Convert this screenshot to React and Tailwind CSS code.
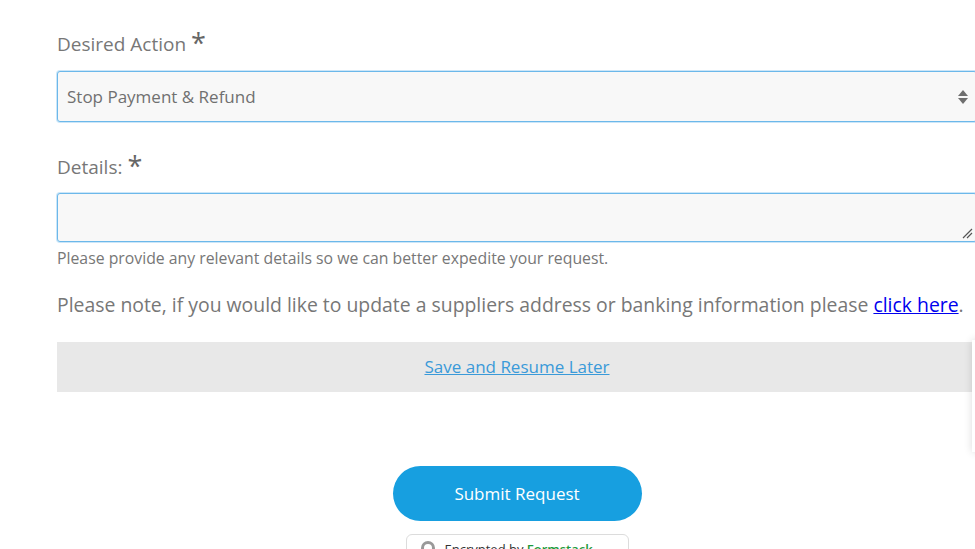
import React from "react";

export default function App() {
  return (
    <div
      className="relative h-[549px] w-[975px] overflow-hidden bg-white text-[#777]"
      style={{ fontFamily: '"Open Sans", "Noto Sans", sans-serif' }}
    >
      <div className="ml-[57px] w-[920px] pt-[28px]">
        <label className="flex items-start text-[19px] leading-[32px]">
          Desired Action
          <span className="ml-[5px] text-[27px] leading-[30px] text-[#666]">*</span>
        </label>
        <div className="relative mt-[11px] flex h-[51px] items-center rounded-[3px] border border-[#6cb8ea] bg-[#f8f8f8] pl-[9px] text-[17px] text-[#707070] shadow-[0_0_0_1px_rgba(108,184,234,0.35)]">
          Stop Payment &amp; Refund
          <svg className="absolute left-[899px] top-[17px]" width="12" height="16" viewBox="0 0 12 16">
            <path d="M6 1 L11 7 L1 7 Z" fill="#6f6f6f" />
            <path d="M1 9 L11 9 L6 15 Z" fill="#6f6f6f" />
          </svg>
        </div>

        <label className="mt-[29px] flex items-start text-[19px] leading-[32px]">
          Details:
          <span className="ml-[5px] text-[27px] leading-[30px] text-[#666]">*</span>
        </label>
        <div className="relative mt-[10px] h-[49px] rounded-[3px] border border-[#6cb8ea] bg-[#f8f8f8] shadow-[0_0_0_1px_rgba(108,184,234,0.35)]">
          <svg className="absolute left-[904px] top-[34px]" width="11" height="11" viewBox="0 0 11 11">
            <path d="M1 10 L10 1 M5 10 L10 5" stroke="#555" strokeWidth="1.2" />
          </svg>
        </div>
        <p className="mt-[5px] text-[15.8px] leading-[22px]">
          Please provide any relevant details so we can better expedite your request.
        </p>
        <p className="mt-[21px] whitespace-nowrap text-[19.4px] leading-[30px]">
          Please note, if you would like to update a suppliers address or banking information please{" "}
          <a href="#" className="text-[#0000ee] underline">click here</a>.
        </p>

        <div className="mt-[22px] flex h-[50px] items-center justify-center bg-[#e8e8e8]">
          <a href="#" className="text-[17px] text-[#3a9ad9] underline">Save and Resume Later</a>
        </div>

        <div className="mt-[74px] flex flex-col items-center">
          <button className="h-[55px] w-[249px] rounded-full bg-[#179fe0] text-[17px] text-white">
            Submit Request
          </button>
          <div className="mt-[13px] flex h-[40px] w-[223px] items-start gap-[10px] rounded-[6px] border border-[#dcdcdc] px-[14px] pt-[5px] text-[13px]">
            <span className="mt-[1px] h-[14px] w-[14px] rounded-full border-[3px] border-[#999]" />
            <span className="text-[#333]">
              Encrypted by <span className="font-semibold text-[#1d9a3a]">Formstack</span>
            </span>
          </div>
        </div>
      </div>

      <div className="absolute left-[972px] top-[340px] h-[112px] w-[60px] bg-white shadow-[0_0_8px_rgba(0,0,0,0.15)]" />
    </div>
  );
}
